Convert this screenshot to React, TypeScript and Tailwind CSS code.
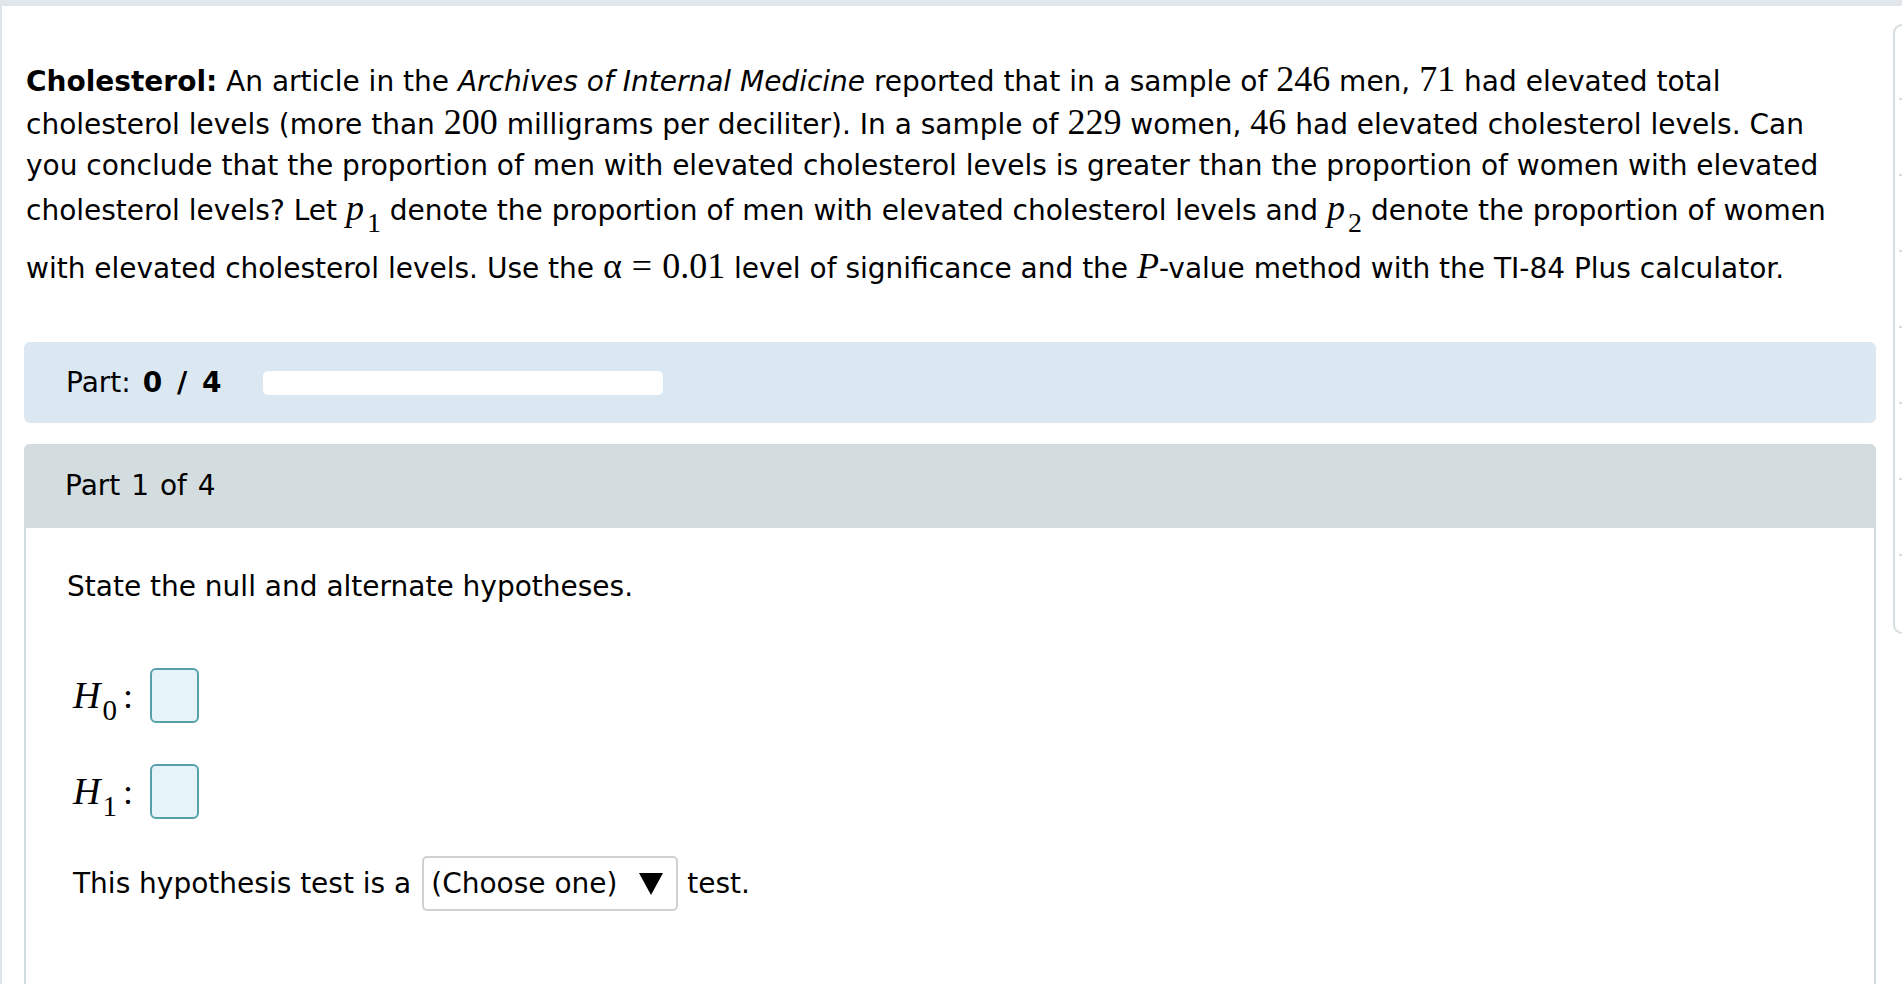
import React from "react";

function M({ children }: { children: React.ReactNode }) {
  return <span className="font-['Liberation_Serif',serif] text-[36px]">{children}</span>;
}

function Sub({ v, s }: { v: string; s: string }) {
  return (
    <span className="font-['Liberation_Serif',serif]">
      <span className="italic text-[36px]">{v}</span>
      <span className="relative top-[12px] text-[28px] ml-[3px]">{s}</span>
    </span>
  );
}

function HLabel({ s }: { s: string }) {
  return (
    <span className="font-['Liberation_Serif',serif] w-[77px] ml-[6px] flex items-baseline">
      <span className="italic text-[38px]">H</span>
      <span className="relative top-[12px] text-[29px] ml-[2px]">{s}</span>
      <span className="text-[36px] ml-[6px]">:</span>
    </span>
  );
}

export default function App() {
  return (
    <div className="w-full h-screen overflow-hidden bg-white flex flex-col text-black font-['DejaVu_Sans',Verdana,sans-serif] text-[28px]">
      <div className="h-[6px] bg-[#e0e6ea] shrink-0" />
      <div className="flex flex-1 min-h-0">
        <div className="flex-1 flex flex-col border-l-2 border-[#dfe5e9] pl-[22px] pr-[17px] pt-[52px]">
          <div className="px-[2px] whitespace-nowrap">
            <div className="h-[43px] leading-[43px]">
              <b>Cholesterol:</b> An article in the <i>Archives of Internal Medicine</i> reported that in a sample of <M>246</M> men, <M>71</M> had elevated total
            </div>
            <div className="h-[43px] leading-[43px]">
              cholesterol levels (more than <M>200</M> milligrams per deciliter). In a sample of <M>229</M> women, <M>46</M> had elevated cholesterol levels. Can
            </div>
            <div className="h-[43px] leading-[43px]">
              you conclude that the proportion of men with elevated cholesterol levels is greater than the proportion of women with elevated
            </div>
            <div className="h-[43px] leading-[43px] mb-[15px]">
              cholesterol levels? Let <Sub v="p" s="1" /> denote the proportion of men with elevated cholesterol levels and <Sub v="p" s="2" /> denote the proportion of women
            </div>
            <div className="h-[43px] leading-[43px]">
              with elevated cholesterol levels. Use the{" "}
              <span className="font-['Liberation_Serif',serif] text-[36px]">
                α<span className="mx-[10px]">=</span>0.01
              </span>{" "}
              level of significance and the <M><i>P</i></M>-value method with the TI-84 Plus calculator.
            </div>
          </div>

          <div className="mt-[54px] h-[81px] shrink-0 rounded-[6px] bg-[#dce8f1] flex items-center pl-[42px]">
            <span>Part:</span>
            <b className="ml-[12px]">
              0<span className="mx-[5px]"> / </span>4
            </b>
            <div className="ml-[42px] w-[400px] h-[24px] rounded-[5px] bg-white" />
          </div>

          <div className="mt-[21px] flex-1 flex flex-col rounded-t-[6px] border-x-2 border-[#d3dcdf]">
            <div className="h-[84px] shrink-0 bg-[#d3dcdf] flex items-center pl-[41px] -mx-[2px] rounded-t-[6px] [word-spacing:2px]">
              Part 1 of 4
            </div>
            <div className="pl-[41px] pt-[37px] flex flex-col">
              <div className="h-[43px] leading-[43px]">State the null and alternate hypotheses.</div>

              <div className="mt-[60px] flex items-center h-[55px]">
                <HLabel s="0" />
                <div className="w-[49px] h-[55px] rounded-[6px] border-2 border-[#55a0ab] bg-[#e6f4f9]" />
              </div>

              <div className="mt-[41px] flex items-center h-[55px]">
                <HLabel s="1" />
                <div className="w-[49px] h-[55px] rounded-[6px] border-2 border-[#55a0ab] bg-[#e6f4f9]" />
              </div>

              <div className="mt-[37px] flex items-center h-[55px] whitespace-nowrap">
                <span className="ml-[6px]">This hypothesis test is a</span>
                <div className="ml-[11px] w-[256px] h-[55px] shrink-0 rounded-[5px] border-2 border-[#d0d0d0] bg-white flex items-center pl-[7px]">
                  <span>(Choose one)</span>
                  <svg className="ml-[22px] shrink-0" width="24" height="22" viewBox="0 0 24 22">
                    <polygon points="0,0 24,0 12,22" fill="#000" />
                  </svg>
                </div>
                <span className="ml-[9px]">test.</span>
              </div>
            </div>
          </div>
        </div>

        <div className="w-[9px] shrink-0 mt-[18px] h-[610px] border-l-2 border-t-2 border-b-2 border-[#d7dee2] rounded-l-[10px] pl-[4px] pt-[72px] flex flex-col">
          {[0, 1, 2, 3, 4, 5, 6].map((i) => (
            <div key={i} className="h-[76px] shrink-0 border-t-2 border-[#d7dee2]" />
          ))}
        </div>
      </div>
    </div>
  );
}
